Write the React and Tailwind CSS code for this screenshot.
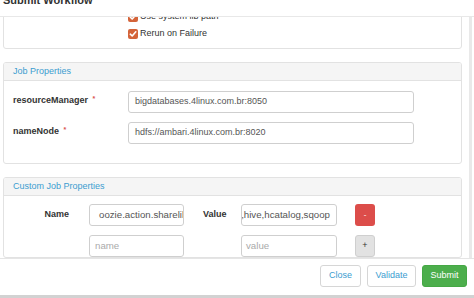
const FONT = "font-['Liberation_Sans',Arial,sans-serif]";

const INPUT =
  "flex h-[22px] items-center overflow-hidden whitespace-nowrap rounded-[3px] border border-[#cfcfcf] bg-white";

function Check() {
  return (
    <span className="flex h-[10px] w-[10px] items-center justify-center rounded-[2px] bg-[#d4643a]">
      <svg width="8" height="8" viewBox="0 0 8 8" fill="none">
        <path d="M1.3 4.2 3.2 6 6.8 1.8" stroke="#fff" strokeWidth="1.6" strokeLinecap="round" strokeLinejoin="round" />
      </svg>
    </span>
  );
}

function PanelHead({ children }) {
  return (
    <div className="flex h-[18px] items-center border-b border-[#e2e2e2] bg-[#f5f5f5] px-[9px] text-[9px] text-[#3c9dd0]">
      {children}
    </div>
  );
}

function Field({ label, value }) {
  return (
    <div className="mb-[9px] flex items-start">
      <div className="w-[115px] pt-[3px] text-[9px] font-bold text-[#333]">
        {label} <span className="relative top-[-2px] ml-[2px] text-[7px] text-[#d9534f]">*</span>
      </div>
      <div className={`${INPUT} w-[286px] pl-[6px] text-[9px] text-[#555]`}>{value}</div>
    </div>
  );
}

export default function App() {
  return (
    <div className={`${FONT} flex h-[298px] w-[474px] flex-col overflow-hidden bg-white`}>
      {/* modal header, mostly scrolled off */}
      <div className="h-[17px] shrink-0 overflow-hidden border-b border-[#e8e8e8] pl-[3px]">
        <div className="mt-[-5px] text-[11px] font-bold leading-[11px] text-[#333]">Submit Workflow</div>
      </div>

      <div className="flex h-[241px] shrink-0 overflow-hidden">
        <div className="w-[467px] pl-[3px] pr-[5px]">
          <div className="mt-[-20px] flex flex-col gap-[13px]">
            {/* options panel */}
            <div className="rounded-[3px] border border-[#e2e2e2] pb-[6px] pl-[124px] pt-[10px] text-[9px] text-[#333]">
              <div className="flex h-[17px] items-center gap-[2px]">
                <Check />
                <span>Use system lib path</span>
              </div>
              <div className="flex h-[17px] items-center gap-[2px]">
                <Check />
                <span>Rerun on Failure</span>
              </div>
            </div>

            {/* job properties */}
            <div className="overflow-hidden rounded-[3px] border border-[#e2e2e2]">
              <PanelHead>Job Properties</PanelHead>
              <div className="px-[9px] pb-[10px] pt-[10px]">
                <Field label="resourceManager" value="bigdatabases.4linux.com.br:8050" />
                <Field label="nameNode" value="hdfs://ambari.4linux.com.br:8020" />
              </div>
            </div>

            {/* custom job properties */}
            <div className="overflow-hidden rounded-[3px] border border-[#e2e2e2]">
              <PanelHead>Custom Job Properties</PanelHead>
              <div className="px-[9px] pt-[8px]">
                <div className="mb-[9px] flex items-center">
                  <div className="w-[56px] text-right text-[9px] font-bold text-[#333]">Name</div>
                  <div className={`${INPUT} ml-[20px] w-[95px] pl-[9px] text-[9.7px] text-[#555]`}>
                    oozie.action.sharelib.for.pig
                  </div>
                  <div className="ml-[19px] w-[38px] text-[9px] font-bold text-[#333]">Value</div>
                  <div className={`${INPUT} w-[96px] justify-end pr-[6px] text-[9.7px] text-[#555]`}>
                    <span>oozie,hive,hcatalog,sqoop</span>
                  </div>
                  <button
                    type="button"
                    className="ml-[18px] flex h-[22px] w-[20px] items-center justify-center rounded-[3px] bg-[#dc4d4a] text-[8px] text-white"
                  >
                    -
                  </button>
                </div>
                <div className="flex items-center">
                  <div className={`${INPUT} ml-[76px] w-[95px] pl-[5px] text-[9.7px] text-[#aaa]`}>name</div>
                  <div className={`${INPUT} ml-[57px] w-[96px] pl-[4px] text-[9.7px] text-[#aaa]`}>value</div>
                  <button
                    type="button"
                    className="ml-[18px] flex h-[22px] w-[20px] items-center justify-center rounded-[3px] border border-[#cfcfcf] bg-[#e2e2e2] text-[9px] text-[#333]"
                  >
                    +
                  </button>
                </div>
              </div>
            </div>
          </div>
        </div>
        {/* scrollbar track */}
        <div className="ml-[2px] w-[3px] bg-[#e9e9e9]" />
      </div>

      {/* footer */}
      <div className="flex h-[37px] shrink-0 justify-end gap-[6px] border-t border-[#e5e5e5] pr-[7px] pt-[6px]">
        <button
          type="button"
          className="h-[22px] w-[41px] rounded-[3px] border border-[#d6d6d6] bg-white text-[9px] text-[#3c9dd0]"
        >
          Close
        </button>
        <button
          type="button"
          className="h-[22px] w-[49px] rounded-[3px] border border-[#d6d6d6] bg-white text-[9px] text-[#3c9dd0]"
        >
          Validate
        </button>
        <button
          type="button"
          className="h-[22px] w-[45px] rounded-[3px] border border-[#45a845] bg-[#4cae4c] text-[9px] text-white"
        >
          Submit
        </button>
      </div>
      <div className="h-[3px] shrink-0 bg-[#d2d2d2]" />
    </div>
  );
}
